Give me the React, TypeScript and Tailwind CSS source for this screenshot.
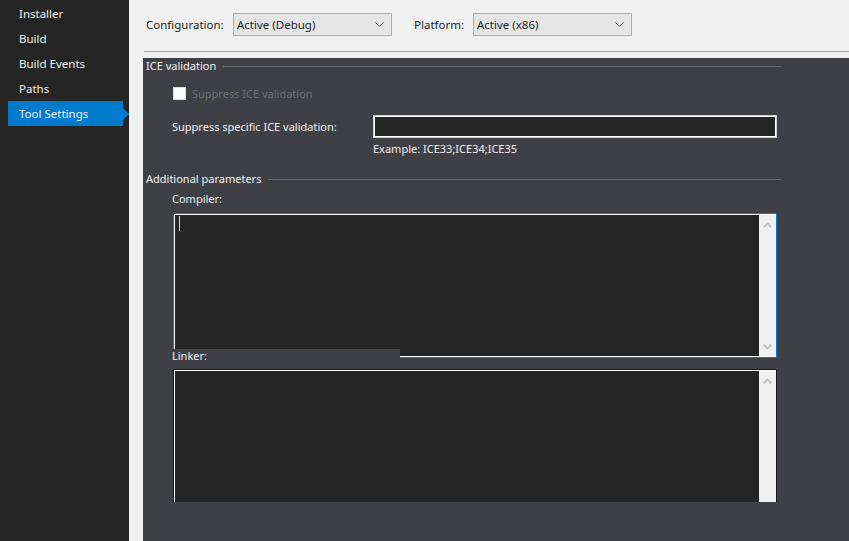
import React from "react";

const font = { fontFamily: '"Noto Sans", "Open Sans", sans-serif' };

function Chevron({ up = true, className = "" }: { up?: boolean; className?: string }) {
  return (
    <svg width="9" height="6" viewBox="0 0 9 6" className={className}>
      <path
        d={up ? "M0.8 5.2 L4.5 1.5 L8.2 5.2" : "M0.8 0.8 L4.5 4.5 L8.2 0.8"}
        fill="none"
        stroke="#c3c3c3"
        strokeWidth="2"
      />
    </svg>
  );
}

function DropChevron() {
  return (
    <svg width="9" height="5" viewBox="0 0 9 5">
      <path d="M0.5 0.5 L4.5 4.5 L8.5 0.5" fill="none" stroke="#606060" strokeWidth="1" />
    </svg>
  );
}

function Dropdown({ value }: { value: string }) {
  return (
    <div className="flex h-[23px] w-[159px] items-center justify-between border border-[#acacac] bg-[#e5e5e5] pl-[3px] pr-[7px] text-[#1e1e1e]">
      <span>{value}</span>
      <DropChevron />
    </div>
  );
}

function GroupHeader({ title }: { title: string }) {
  return (
    <div className="flex h-4 w-[638px] items-center pl-[3px] text-[#f1f1f1]">
      <span className="leading-4">{title}</span>
      <div className="ml-[7px] h-px flex-1 bg-[#6b6b6b]" />
    </div>
  );
}

function Scrollbar({ bottom = true }: { bottom?: boolean }) {
  return (
    <div className="flex w-[17px] flex-col items-center justify-between bg-[#f0f0f0] pt-[7px] pb-[6px]">
      <Chevron up />
      {bottom ? <Chevron up={false} /> : <div />}
    </div>
  );
}

export default function App() {
  const items = ["Installer", "Build", "Build Events", "Paths", "Tool Settings"];
  return (
    <div className="flex h-[541px] w-[849px] overflow-hidden text-[11px]" style={font}>
      {/* Sidebar */}
      <div className="flex w-[129px] flex-col bg-[#252526] pt-px text-[11.5px]">
        {items.map((it, i) => {
          const sel = i === items.length - 1;
          return (
            <div
              key={it}
              className={`relative ml-2 flex h-[25px] w-[115px] items-center pl-[11px] text-[#f1f1f1] ${sel ? "bg-[#007acc]" : ""}`}
            >
              {it}
              {sel && (
                <div className="absolute left-[115px] top-[7px] h-0 w-0 border-y-[6px] border-l-[6px] border-y-transparent border-l-[#007acc]" />
              )}
            </div>
          );
        })}
      </div>

      {/* Main */}
      <div className="flex flex-1 flex-col bg-[#f0f0f0]">
        <div className="flex h-[51px] items-start pl-[17px] pt-[13px] text-[11.5px]">
          <div className="flex h-[23px] w-[87px] items-center text-[#1e1e1e]">Configuration:</div>
          <Dropdown value="Active (Debug)" />
          <div className="ml-[22px] flex h-[23px] w-[59px] items-center text-[#1e1e1e]">Platform:</div>
          <Dropdown value="Active (x86)" />
        </div>
        <div className="ml-[15px] h-px bg-[#a0a0a0]" />
        <div className="h-[6px]" />

        {/* Dark panel */}
        <div className="ml-[14px] flex flex-1 flex-col bg-[#3f4046] text-[#f1f1f1]">
          <GroupHeader title="ICE validation" />

          <div className="mt-[13px] flex h-[13px] items-center pl-[30px]">
            <div className="h-[13px] w-[13px] shrink-0 border border-[#e0e0e0] bg-[#ffffff] opacity-100" />
            <span className="ml-[6px] translate-y-px text-[#6e6e6e]">Suppress ICE validation</span>
          </div>

          <div className="mt-[15px] flex h-[23px] items-center pl-[29px]">
            <span className="w-[201px] translate-y-px">Suppress specific ICE validation:</span>
            <div className="h-[23px] w-[404px] border border-[#cfcfcf] bg-[#252526] shadow-[inset_0_0_0_1px_#ffffff]" />
          </div>

          <div className="mt-[3px] flex h-4 items-center pl-[230px]">Example: ICE33;ICE34;ICE35</div>

          <div className="mt-[14px]">
            <GroupHeader title="Additional parameters" />
          </div>

          <div className="mt-1 flex h-4 items-center pl-[29px]">Compiler:</div>

          <div className="ml-[30px] mt-[6px] flex h-[145px] w-[604px] border border-[#0078d7] bg-[#252526] shadow-[inset_0_0_0_1px_#ffffff]">
            <div className="flex-1 pl-[5px] pt-[2px]">
              <div className="h-[15px] w-px bg-[#d4d4d4]" />
            </div>
            <div className="flex py-px">
              <Scrollbar />
            </div>
          </div>

          <div className="relative ml-[29px] mt-[-9px] flex h-[11px] w-[228px] items-end bg-[#3f4046] leading-[12px]">
            <span className="translate-y-[2px]">Linker:</span>
          </div>

          <div className="ml-[30px] mt-[9px] flex h-[133px] w-[604px] border border-b-0 border-[#1a1a1a] bg-[#252526] shadow-[inset_1px_1px_0_0_#ffffff]">
            <div className="flex-1" />
            <div className="flex pt-px">
              <Scrollbar bottom={false} />
            </div>
          </div>
        </div>
      </div>
    </div>
  );
}
